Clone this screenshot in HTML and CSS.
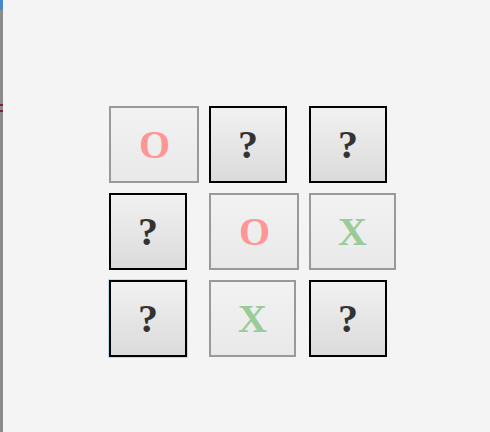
FILE: index.html
```html
<!DOCTYPE html>
<html>
<head>
<meta charset="utf-8">
<link rel="stylesheet" href="styles.css">
</head>
<body>
<div class="page">
  <div class="edge">
    <div class="edge-top"></div>
    <div class="edge-gap"></div>
    <div class="edge-mark"></div>
    <div class="edge-gap2"></div>
    <div class="edge-mark"></div>
  </div>
  <main class="main">
    <div class="board">
      <button class="cell revealed o">O</button>
      <button class="cell hidden">?</button>
      <button class="cell hidden">?</button>
      <button class="cell hidden">?</button>
      <button class="cell revealed o">O</button>
      <button class="cell revealed x">X</button>
      <button class="cell hidden focused">?</button>
      <button class="cell revealed x">X</button>
      <button class="cell hidden">?</button>
    </div>
  </main>
</div>
</body>
</html>
```
FILE: styles.css
```css
html, body {
  margin: 0;
  padding: 0;
  background: #f4f4f4;
  height: 100%;
}
.page {
  display: flex;
  height: 432px;
  overflow: hidden;
}
.edge {
  width: 3px;
  flex: none;
  background: #8c8c8c;
  display: flex;
  flex-direction: column;
}
.edge-top {
  height: 10px;
  background: #4a88cc;
}
.edge-gap { height: 94px; }
.edge-gap2 { height: 4px; }
.edge-mark {
  height: 2px;
  background: #7a2140;
}
.main {
  flex: 1;
  padding: 106px 0 0 106px;
}
.board {
  display: grid;
  grid-template-columns: repeat(3, 100px);
  grid-auto-rows: 77px;
  row-gap: 10px;
  justify-items: start;
}
.cell {
  box-sizing: border-box;
  height: 77px;
  padding: 0 27px;
  margin: 0;
  font-family: "Liberation Serif", "Times New Roman", serif;
  font-weight: bold;
  font-size: 40px;
  line-height: 1;
  display: flex;
  align-items: center;
  justify-content: center;
  border-radius: 0;
  cursor: pointer;
}
.hidden {
  border: 2px solid #000;
  color: #333;
  background: linear-gradient(#f1f1f1, #dbdbdb);
}
.revealed {
  border: 2px solid #999;
  background: linear-gradient(#f2f2f2, #e9e9e9);
}
.o { color: #ff9696; padding-left: 28px; }
.x { color: #99cc99; }
.focused {
  box-shadow: 0 0 0 1px #b4e0ee;
}
```
